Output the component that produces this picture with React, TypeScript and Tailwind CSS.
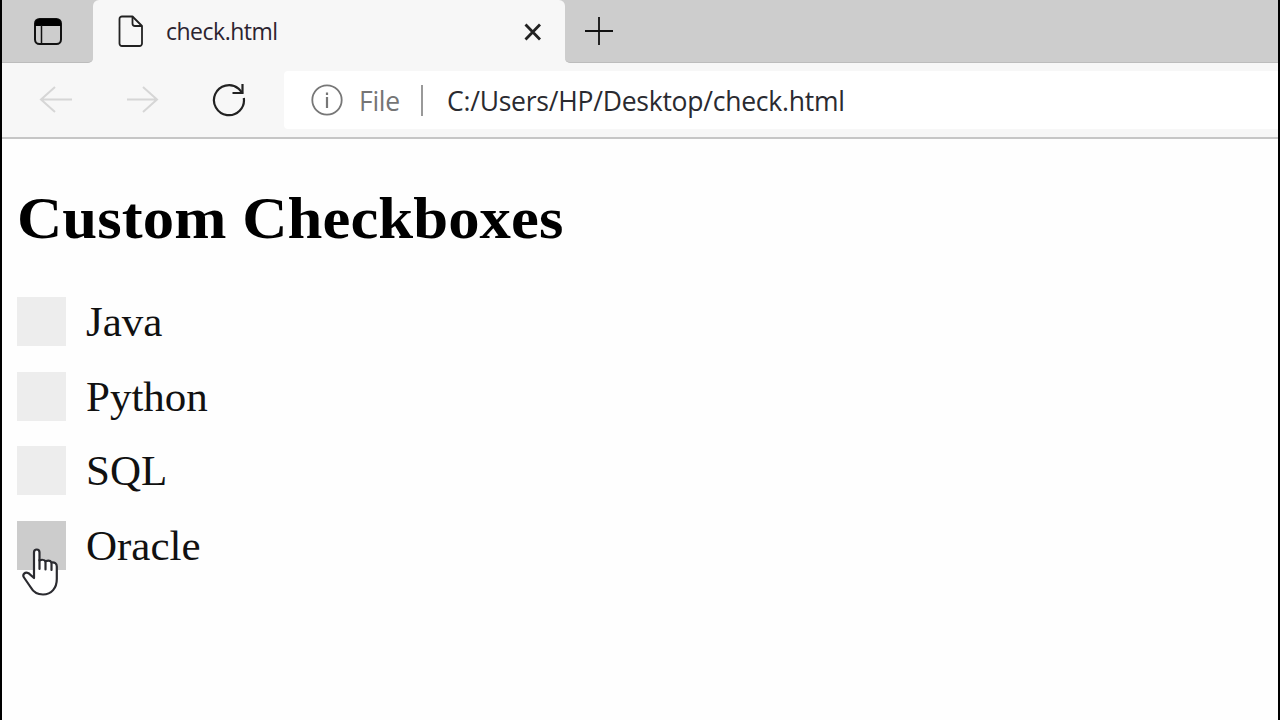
import React from 'react';

interface Option {
  readonly id: string;
  readonly label: string;
  readonly hovered?: boolean;
}

const options: readonly Option[] = [
  { id: 'java', label: 'Java' },
  { id: 'python', label: 'Python' },
  { id: 'sql', label: 'SQL' },
  { id: 'oracle', label: 'Oracle', hovered: true },
];

const HandCursor: React.FC = () => (
  <svg
    className="absolute left-[5px] top-[27px]"
    width="38"
    height="50"
    viewBox="0 0 38 50"
    fill="#fff"
    stroke="#2b2b30"
    strokeWidth="2.200"
    strokeLinejoin="round"
    strokeLinecap="round"
  >
    <path d="M12 30V4.500C12 .5 17.500 .5 17.500 4.500V12.500C19.500 11.600 22.500 11.800 23.500 13.300C26 12.400 28.500 12.800 29.500 14.500C32.500 14 34.800 15.500 34.800 18.500V31C34.800 40 29.500 46.500 21 46.500C14.500 46.500 11 43.500 8.500 39L2 29.500C0 26.500 3 23.500 6.500 25.200Z" />
    <path d="M17.500 12V21M23.500 13.500V21.500M29.500 15V22" fill="none" />
  </svg>
);

const TabStrip: React.FC = () => (
  <div className="flex h-[63px] bg-[#f7f7f7]">
    <div className="flex w-[91px] items-center rounded-br-[5px] border-b border-[#bcbcbc] bg-[#cdcdcd] pl-[31px]">
      <svg width="30" height="30" viewBox="0 0 30 30" fill="none" stroke="#111" strokeWidth="2">
        <rect x="2" y="3" width="26" height="25" rx="4.500" />
        <path d="M2 10V7.500A4.500 4.500 0 0 1 6.500 3H23.500A4.500 4.500 0 0 1 28 7.500V10Z" fill="#000" stroke="none" />
        <path d="M8.500 9V28" strokeWidth="1.500" />
      </svg>
    </div>
    <div className="flex-1 bg-[#cdcdcd]">
      <div className="flex h-[63px] bg-[linear-gradient(to_bottom,#cdcdcd_50%,#f7f7f7_50%)]">
        <div className="flex w-[472px] items-center rounded-t-[6px] bg-[#f7f7f7] pl-[25px] pr-[23px]">
          <svg width="26" height="33" viewBox="0 0 26 33" fill="none" stroke="#222" strokeWidth="1.800" strokeLinejoin="round">
            <path d="M4 1.500H14.500L24 11V28.500A2.500 2.500 0 0 1 21.500 31H4A2.500 2.500 0 0 1 1.500 28.500V4A2.500 2.500 0 0 1 4 1.500Z" />
            <path d="M14.500 1.500V8.500A2.500 2.500 0 0 0 17 11H24" />
          </svg>
          <span className="-mt-0.5 ml-[22px] whitespace-nowrap text-[23px] leading-8 tracking-[-0.5px] text-[#2c2430]">
            check.html
          </span>
          <svg className="ml-auto" width="18" height="18" viewBox="0 0 18 18" stroke="#222" strokeWidth="2.800">
            <path d="M1.500 1.500L16 16.500M16 1.500L1.500 16.500" />
          </svg>
        </div>
        <div className="flex flex-1 items-center rounded-bl-[5px] border-b border-[#bcbcbc] bg-[#cdcdcd] pl-5">
          <svg width="28" height="28" viewBox="0 0 28 28" stroke="#111" strokeWidth="1.800">
            <path d="M0 14H28M14 0V28" />
          </svg>
        </div>
      </div>
    </div>
  </div>
);

const Toolbar: React.FC = () => (
  <div className="flex h-[76px] items-start border-b-2 border-[#c6c6c6] bg-[#f7f7f7] pt-2">
    <div className="flex h-[58px] w-[282px] items-center pl-[37px]">
      <svg width="34" height="28" viewBox="0 0 34 28" fill="none" stroke="#d6d6d6" strokeWidth="2">
        <path d="M33 13.500H2M16 1L2 13.500L16 26" />
      </svg>
      <svg className="ml-[53px]" width="34" height="28" viewBox="0 0 34 28" fill="none" stroke="#d6d6d6" strokeWidth="2">
        <path d="M1 13.500H31M17 1L31 13.500L17 26" />
      </svg>
      <svg className="ml-[51px]" width="36" height="36" viewBox="0 0 36 36" fill="none" stroke="#222" strokeWidth="2.200">
        <path d="M32.800 16A15 15 0 1 1 27.500 6.600L31.500 11" />
        <path d="M31.500 2V11H21.500" />
      </svg>
    </div>
    <div className="flex h-[58px] flex-1 items-center rounded-l-[4px] bg-white pl-[27px] text-[26.500px]">
      <svg width="32" height="32" viewBox="0 0 32 32" fill="none" stroke="#777" strokeWidth="1.800">
        <circle cx="16" cy="16" r="14.700" />
        <path d="M16 13V24M16 8.500V11" strokeWidth="2.200" />
      </svg>
      <span className="ml-4 mt-0.5 w-[42px] whitespace-nowrap leading-9 tracking-[-0.3px] text-[#757575]">File</span>
      <span className="ml-[20px] h-[31px] w-[2px] bg-[#999]" />
      <span className="ml-[24px] mt-0.5 whitespace-nowrap leading-9 tracking-[-0.24px] text-[#2a2a30]">
        C:/Users/HP/Desktop/check.html
      </span>
    </div>
  </div>
);

const App: React.FC = () => {
  return (
    <div className="h-[720px] w-[1280px] overflow-hidden border-x-2 border-black bg-[#fefefe] font-['Open_Sans','Noto_Sans',sans-serif]">
      <TabStrip />
      <Toolbar />
      <main className="pl-[15px] pt-[43px] font-['Liberation_Serif',serif] text-black">
        <h1 className="origin-center scale-y-[0.95] text-[62.700px] font-bold leading-[72px] tracking-[0.08px]">
          Custom Checkboxes
        </h1>
        <div className="mt-[43px] flex flex-col gap-[25.700px]">
          {options.map((option) => (
            <label key={option.id} className="relative flex h-[49px] items-center text-[43px] leading-[49px] text-[#111]">
              <span className={option.hovered ? 'h-[49px] w-[49px] bg-[#cccccc]' : 'h-[49px] w-[49px] bg-[#ededed]'} />
              <span className="ml-5">{option.label}</span>
              {option.hovered && <HandCursor />}
            </label>
          ))}
        </div>
      </main>
    </div>
  );
};

export default App;
